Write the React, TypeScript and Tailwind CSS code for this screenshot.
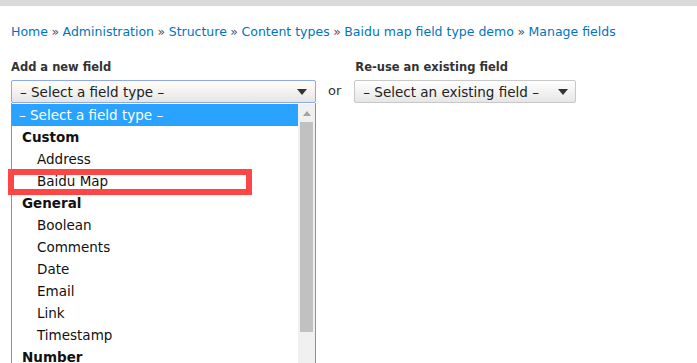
import React from 'react';

const crumbs = ['Home', 'Administration', 'Structure', 'Content types', 'Baidu map field type demo', 'Manage fields'];

type Row = { label: string; group?: boolean; selected?: boolean };

const rows: Row[] = [
  { label: '– Select a field type –', selected: true },
  { label: 'Custom', group: true },
  { label: 'Address' },
  { label: 'Baidu Map' },
  { label: 'General', group: true },
  { label: 'Boolean' },
  { label: 'Comments' },
  { label: 'Date' },
  { label: 'Email' },
  { label: 'Link' },
  { label: 'Timestamp' },
  { label: 'Number', group: true },
];

const Arrow = () => (
  <svg width="10" height="6" viewBox="0 0 10 6" className="shrink-0">
    <path d="M0 0 H10 L5 6 Z" fill="#333" />
  </svg>
);

const App: React.FC = () => {
  return (
    <div className="relative w-[697px] h-[363px] overflow-hidden bg-white font-['DejaVu_Sans',sans-serif] text-[#333]">
      <div className="h-[6px] bg-[#dadada]" />

      {/* Breadcrumb */}
      <div className="mt-[17px] px-[11px] h-[18px] flex items-center text-[12.5px] text-[#0074bd] whitespace-nowrap">
        {crumbs.map((c, i) => (
          <React.Fragment key={c}>
            {i > 0 && <span className="text-[#5a4a6a] px-[3.5px]">»</span>}
            <span>{c}</span>
          </React.Fragment>
        ))}
      </div>

      <div className="mt-[19px] px-[11px] flex items-start">
        {/* Add a new field */}
        <div className="w-[305px] flex flex-col">
          <div className="h-[16px] flex items-center text-[11.5px] font-bold text-[#333]">Add a new field</div>
          <div className="mt-[4px] h-[23px] flex items-center justify-between pl-[8px] pr-[8px] border border-[#8ea6f3] rounded-[2px] bg-gradient-to-b from-[#fffef8] to-[#e6e6e6] text-[13.5px] text-[#222]">
            <span className="pt-[1px]">– Select a field type –</span>
            <Arrow />
          </div>
          <div className="flex h-[270px] pt-[1px] border-x border-[#6f8ef5]">
            <div className="flex-1 flex flex-col text-[13.5px] text-[#111]">
              {rows.map(r => (
                <div
                  key={r.label}
                  className={`h-[22px] shrink-0 flex items-center pt-[1px] whitespace-nowrap ${
                    r.selected ? 'bg-[#29a3ff] text-white pl-[7px]' : r.group ? 'font-bold pl-[10px]' : 'pl-[25px]'
                  }`}
                >
                  {r.label}
                </div>
              ))}
            </div>
            <div className="w-[17px] bg-[#f0f0f0] flex flex-col items-center">
              <div className="h-[18px] flex items-center justify-center">
                <svg width="8" height="5" viewBox="0 0 8 5">
                  <path d="M0 5 L4 0 L8 5 Z" fill="#a3a3a3" />
                </svg>
              </div>
              <div className="w-[13px] h-[210px] bg-[#c1c1c1]" />
            </div>
          </div>
        </div>

        <div className="ml-[12px] mt-[19px] h-[23px] flex items-center text-[13px] text-[#333]">or</div>

        {/* Re-use an existing field */}
        <div className="ml-[13px] flex flex-col">
          <div className="pl-[1px] h-[16px] flex items-center text-[11.5px] font-bold text-[#333]">Re-use an existing field</div>
          <div className="mt-[4px] w-[222px] h-[23px] flex items-center justify-between pl-[8px] pr-[7px] border border-[#c8c8c8] rounded-[2px] bg-gradient-to-b from-white to-[#e6e6e6] text-[13.5px] text-[#222]">
            <span className="pt-[1px]">– Select an existing field –</span>
            <Arrow />
          </div>
        </div>
      </div>

      {/* Highlight annotation */}
      <div className="absolute left-[8px] top-[169px] w-[244px] h-[26px] border-[6px] border-[#fe4646]" />
    </div>
  );
};

export default App;
